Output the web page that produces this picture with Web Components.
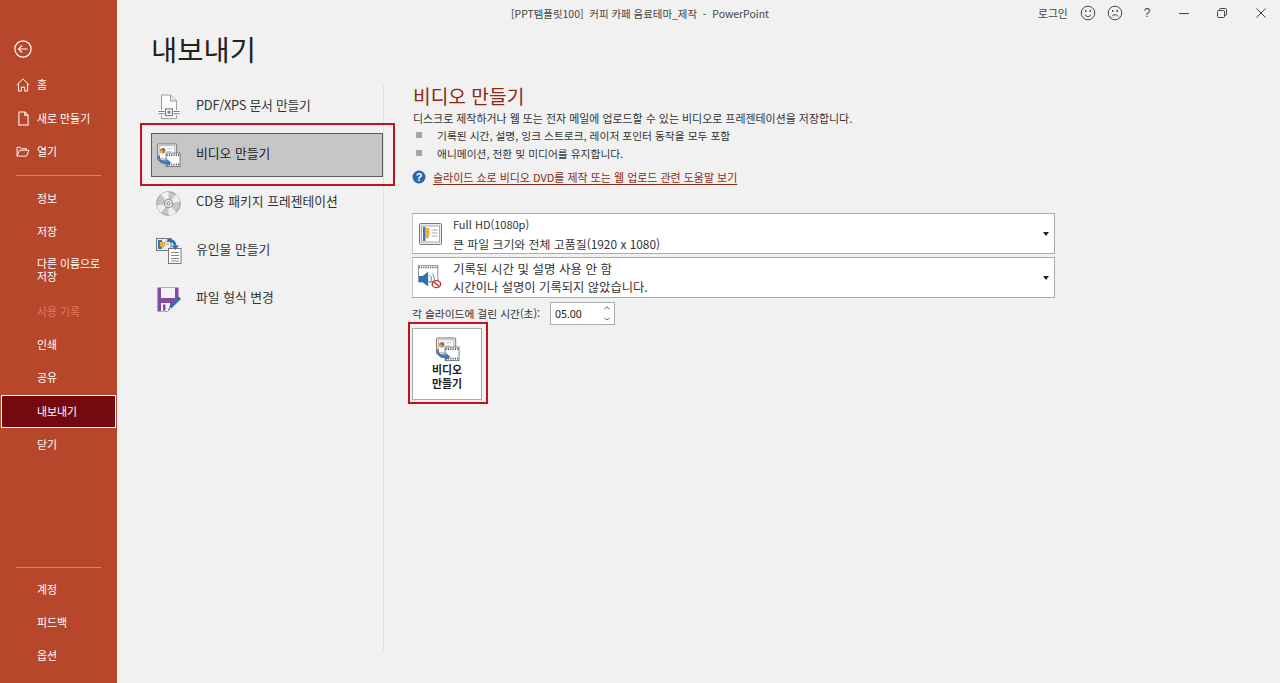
<!DOCTYPE html>
<html lang="ko"><head><meta charset="utf-8"><title>내보내기</title>
<style>
html,body{margin:0;height:100%;overflow:hidden}
body{font-family:"Noto Sans CJK KR","Noto Sans",sans-serif;background:#f1f1f1;color:#333}
</style></head><body>
<ppt-app></ppt-app>
<script>
const ICONS={
back:`<svg width="18" height="18" viewBox="0 0 20 20" fill="none" stroke="#fff" stroke-width="1.300"><circle cx="10" cy="10" r="9"/><path d="M15 10H5.200M9 6l-4 4 4 4"/></svg>`,
home:`<svg width="14" height="14" viewBox="0 0 16 16" fill="none" stroke="#fff" stroke-width="1.100"><path d="M.8 8 8 1l7.200 7M2.800 6.500V15H6v-4.500h4V15h3.200V6.500"/></svg>`,
new:`<svg width="11" height="15" viewBox="0 0 12 16" fill="none" stroke="#fff" stroke-width="1.100"><path d="M1 .8h6.500L11 4.300V15H1zM7.300 1v3.500H11"/></svg>`,
open:`<svg width="14" height="11" viewBox="0 0 16 13" fill="none" stroke="#fff" stroke-width="1.100"><path d="M1 12V1.500h4l1.300 1.700H12V5M1 12l2.800-7H15l-2.800 7z"/></svg>`,
pdf:`<svg width="24" height="26" viewBox="0 0 32 34"><path d="M6 1h12l8 8v23.500H6z" fill="#fbfbfb" stroke="#9a9a9a" stroke-width="1.300"/><path d="M18 1v8h8" fill="#e4e4e4" stroke="#9a9a9a" stroke-width="1.300"/><rect x="2" y="21" width="28" height="7" fill="#fff"/><path d="M2 23h8M2 26h8M22 23h8M22 26h8" stroke="#777" stroke-width="1.600"/><rect x="11.500" y="19.500" width="9" height="9" fill="#fff" stroke="#666" stroke-width="1.300"/><rect x="14" y="22" width="4" height="4" fill="#888"/></svg>`,
video:`<svg width="25" height="25" viewBox="0 0 26 26"><rect x="1.500" y="1" width="20" height="17" rx="1" fill="#e9e9ec" stroke="#777"/><rect x="3.500" y="3" width="16" height="13" fill="#fff" stroke="#bbb"/><path d="M11 6h6M11 9h5" stroke="#bbb"/><circle cx="7" cy="8" r="2.800" fill="#d9702e"/><path d="M7 8V5.200A2.800 2.800 0 0 1 9.800 8z" fill="#3f7fbf"/><path d="M4.200 8a2.800 2.800 0 0 0 2.800 2.800V8z" fill="#e2b33c"/><rect x="10.500" y="10.500" width="14.500" height="14" fill="#fff" stroke="#777"/><path d="M11 12.500h13.500M11 22.500h13.500" stroke="#555" stroke-width="1.800" stroke-dasharray="1.200 1.200"/><path d="M4 13c0 5 2 6 7 6v-2.500l5 4-5 4V22c-6 0-9-2-9-9z" fill="#3a78b5"/></svg>`,
cd:`<svg width="25" height="25" viewBox="0 0 26 26"><circle cx="13" cy="13" r="12.300" fill="#c6c6c6" stroke="#9a9a9a"/><path d="M13 13 5 3.500A12.300 12.300 0 0 1 13 .7zM13 13l8 9.500a12.300 12.300 0 0 1-8 2.800zM13 13l12-2a12.300 12.300 0 0 0-4-7.500zM13 13 1 15a12.300 12.300 0 0 0 4 7.500z" fill="#efefef"/><circle cx="13" cy="13" r="4.200" fill="#e4e4e4" stroke="#888"/><circle cx="13" cy="13" r="1.500" fill="#fff" stroke="#777"/></svg>`,
handout:`<svg width="26" height="26" viewBox="0 0 26 26"><rect x=".5" y=".5" width="14.500" height="12" fill="#e9e9ec" stroke="#777"/><rect x="2" y="2" width="4" height="9" fill="#3a78b5"/><path d="M4 4h5v4L6.500 10 4 8z" fill="#e6b23c"/><path d="M9 3.500h4M9 6h4" stroke="#aaa"/><rect x="12.500" y="10.500" width="12.500" height="15" fill="#fff" stroke="#777"/><path d="M15 14.500h8M15 17.500h8M15 20.500h8M15 23h8" stroke="#888"/><path d="M11 1.500c5-1.500 9 1 9.500 6h2.500l-3.800 4.500-3.700-4.500H18c-.4-2.500-3-4-6.500-3.500z" fill="#2f72b2"/></svg>`,
save:`<svg width="24" height="25" viewBox="0 0 24 25"><path d="M.5.500H21.500V13L11 24.500H.5z" fill="#7d4f9f"/><rect x="4" y="1" width="14" height="10" fill="#f5f1f8"/><rect x="4" y="16" width="9" height="8" fill="#f5f1f8"/><rect x="6" y="17.500" width="2.500" height="6" fill="#7d4f9f"/><path d="M11 24l1.200-4.500L22 9.500l2 2.500-10 9.800z" fill="#2f72b2"/><path d="M12 20l2 2" stroke="#fff"/></svg>`,
help:`<svg width="14" height="14" viewBox="0 0 14 14"><circle cx="7" cy="7" r="6.500" fill="#2a67a8"/><text x="7" y="10.800" text-anchor="middle" font-family="Liberation Sans" font-weight="700" font-size="11" fill="#fff">?</text></svg>`,
hd:`<svg width="23" height="22" viewBox="0 0 23 22"><rect x=".5" y=".5" width="22" height="21" rx="1" fill="#ececf0" stroke="#777"/><rect x="2.500" y="3" width="18" height="16" fill="#fff" stroke="#aaa"/><rect x="4" y="4" width="2.500" height="14" fill="#3a78b5"/><path d="M6.500 5h4v8l-2 3-2-2z" fill="#e6b23c"/><path d="M12.500 7h6M12.500 10h6M12.500 13h6" stroke="#aaa"/></svg>`,
noaudio:`<svg width="24" height="25" viewBox="0 0 26 32" preserveAspectRatio="none"><rect x=".5" y=".5" width="21" height="21" fill="#fff" stroke="#888"/><path d="M1 3h20" stroke="#555" stroke-width="2" stroke-dasharray="1.200 1.200"/><path d="M1 14h4l6-5.500v19L5 22H1z" fill="#2f72b2"/><path d="M13 13c2 2 2 8 0 10M15 10.500c3.500 3.500 3.500 11.500 0 15" fill="none" stroke="#2f72b2"/><circle cx="20" cy="24.500" r="4.500" fill="#fff" stroke="#c0392b" stroke-width="1.600"/><path d="m17 21.500 6 6" stroke="#c0392b" stroke-width="1.600"/></svg>`,
smile:`<svg width="16" height="16" viewBox="0 0 16 16" fill="none" stroke="#444"><circle cx="8" cy="8" r="6.800"/><path d="M4.800 9.800c1.500 2.300 4.900 2.300 6.400 0"/><path d="M5.700 5v2M10.300 5v2" stroke-width="1.300"/></svg>`,
frown:`<svg width="16" height="16" viewBox="0 0 16 16" fill="none" stroke="#444"><circle cx="8" cy="8" r="6.800"/><path d="M4.800 11.500c1.500-2.300 4.900-2.300 6.400 0"/><path d="M5.700 5v2M10.300 5v2" stroke-width="1.300"/></svg>`,
min:`<svg width="10" height="10" viewBox="0 0 10 10"><path d="M0 5.500h10" stroke="#444"/></svg>`,
max:`<svg width="10" height="10" viewBox="0 0 10 10" fill="none" stroke="#444"><rect x=".5" y="2.500" width="7" height="7" rx="1"/><path d="M2.500 2.500V1.500a1 1 0 0 1 1-1h5a1 1 0 0 1 1 1v5a1 1 0 0 1-1 1h-1"/></svg>`,
close:`<svg width="10" height="10" viewBox="0 0 10 10" fill="none" stroke="#444"><path d="m.5.500 9 9M9.500.500l-9 9"/></svg>`
};
function def(name,css,html,init){
  const t=document.createElement('template');t.innerHTML=`<style>${css}</style>${html}`;
  customElements.define(name,class extends HTMLElement{
    constructor(){super();this.attachShadow({mode:'open'}).appendChild(t.content.cloneNode(true));}
    connectedCallback(){init&&init(this,this.shadowRoot);}
  });
}
def('ppt-icon',':host{display:inline-flex;align-items:center;justify-content:center;flex:none}svg{display:block}','<span style="display:contents"></span>',(h,s)=>{s.querySelector('span').innerHTML=ICONS[h.getAttribute('name')]||'';});

def('ppt-nav-item',`:host{display:flex;align-items:center;height:33.200px;box-sizing:border-box;color:#fff;font-size:10.900px;line-height:13px;padding-left:37px;position:relative;flex:none}
:host([disabled]){color:#dd7a62}
:host([active]){background:#740a0f;box-shadow:inset 0 0 0 1px #fff;margin:.8px 1px 0;padding-left:36px}
:host([two]){height:46.800px;font-family:"Liberation Sans","Noto Sans CJK KR",sans-serif}
.ic{position:absolute;left:0;width:46px;top:0;bottom:0;display:flex;align-items:center;justify-content:center;box-sizing:border-box}`,
`<span class="ic"><slot name="icon"></slot></span><span><slot></slot></span>`);

def('ppt-nav',`:host{display:flex;flex-direction:column;width:117px;flex:none;height:683px;background:#b7472a;box-sizing:border-box;padding-top:40px;padding-bottom:10.500px}
.back{height:18px;padding-left:14px;display:flex;margin-bottom:10.400px}
.rule{height:1px;background:#d9826c;margin:7.500px 16px 5.200px;flex:none}
.grow{flex:1}`,
`<div class="back"><ppt-icon name="back"></ppt-icon></div>
<ppt-nav-item><ppt-icon slot="icon" name="home"></ppt-icon>홈</ppt-nav-item>
<ppt-nav-item><ppt-icon slot="icon" name="new"></ppt-icon>새로 만들기</ppt-nav-item>
<ppt-nav-item><ppt-icon slot="icon" name="open"></ppt-icon>열기</ppt-nav-item>
<div class="rule"></div>
<ppt-nav-item>정보</ppt-nav-item><ppt-nav-item>저장</ppt-nav-item>
<ppt-nav-item two>다른 이름으로<br>저장</ppt-nav-item>
<ppt-nav-item disabled>사용 기록</ppt-nav-item>
<ppt-nav-item>인쇄</ppt-nav-item><ppt-nav-item>공유</ppt-nav-item>
<ppt-nav-item active>내보내기</ppt-nav-item><ppt-nav-item>닫기</ppt-nav-item>
<div class="grow"></div><div class="rule" style="margin:0 16px 5px"></div>
<ppt-nav-item>계정</ppt-nav-item><ppt-nav-item>피드백</ppt-nav-item><ppt-nav-item>옵션</ppt-nav-item>`);

def('ppt-titlebar',`:host{display:flex;align-items:center;height:26px;position:relative;color:#444;font-size:10.450px}
.t{flex:1;text-align:center;white-space:pre;padding-right:117px}
.r{position:absolute;right:0;top:0;height:26px;display:flex;align-items:center}
.l{width:36px;font-size:10.800px}
.b{width:27px;display:flex;justify-content:center}
.q{font-family:"Liberation Sans";font-size:12px;width:38px}
.w{display:flex;justify-content:center}`,
`<div class="t"><slot></slot></div>
<div class="r"><span class="l">로그인</span><span class="b"><ppt-icon name="smile"></ppt-icon></span><span class="b"><ppt-icon name="frown"></ppt-icon></span><span class="b q">?</span><span class="w" style="width:36px"><ppt-icon name="min"></ppt-icon></span><span class="w" style="width:40px"><ppt-icon name="max"></ppt-icon></span><span class="w" style="width:38px"><ppt-icon name="close"></ppt-icon></span></div>`);

def('ppt-export-item',`:host{display:flex;align-items:center;height:44px;margin:4px 0 4px 11px;width:232px;box-sizing:border-box;font-size:12.800px;color:#333;border:1px solid transparent}
:host([selected]){background:#c6c6c6;border-color:#5c5c5c;color:#222}
.i{width:33px;display:flex;justify-content:center;margin-right:11px;flex:none}
.tx{margin-bottom:6px}`,
`<span class="i"><slot name="icon"></slot></span><span class="tx"><slot></slot></span>`);

def('ppt-dropdown',`:host{display:flex;align-items:center;width:643px;height:41px;background:#fff;border:1px solid #ababab;border-left-color:#c4c4c4;box-sizing:border-box;font-size:12.300px;color:#333;position:relative}
.i{width:34px;flex:none;display:flex;justify-content:center;margin-right:6px}
.tx{display:flex;flex-direction:column;gap:6px;line-height:13px;flex:1}
.a{width:0;height:0;border:3px solid transparent;border-top:4px solid #222;border-bottom:0;margin-right:5px}`,
`<span class="i"><slot name="icon"></slot></span><span class="tx"><slot></slot></span><span class="a"></span>`);

def('ppt-spin',`:host{display:flex;align-items:center;width:65px;height:23px;background:#fff;border:1px solid #ababab;box-sizing:border-box;font-size:10.500px;color:#222;padding-left:4px;font-family:"Noto Sans","Noto Sans CJK KR",sans-serif}
span{flex:1}
svg{display:block;margin-right:3px}`,
`<span><slot></slot></span><svg width="8" height="17" viewBox="0 0 8 17" fill="none" stroke="#666"><path d="m1.500 4 2.500-2 2.500 2M1.500 13 4 15l2.500-2"/></svg>`);

def('ppt-make',`:host{display:flex;flex-direction:column;align-items:center;width:70px;height:72px;background:#fff;border:1px solid #ababab;box-sizing:border-box;font-size:10.900px;font-weight:700;color:#222;text-align:center;line-height:14px;padding-top:8px}
.t{margin-top:1px;font-family:"Liberation Sans","Noto Sans CJK KR",sans-serif}`,
`<ppt-icon name="video"></ppt-icon><div class="t"><slot></slot></div>`);

def('ppt-app',`:host{display:flex;width:1280px;height:683px;position:relative;overflow:hidden;background:#f1f1f1}
.main{flex:1;display:flex;flex-direction:column;min-width:0}
h1{font-weight:400;font-size:28.500px;line-height:40px;color:#222;margin:3px 0 0 34px;height:40px}
.cols{display:flex;margin-top:15px}
.left{width:267px;height:568px;border-right:1px solid #e2e2e2;box-sizing:border-box;padding-left:23px;flex:none}
.right{padding-left:28px;flex:1}
.list{margin-top:-3px}
.hi{position:absolute;border:2px solid #c8101a;box-sizing:border-box;pointer-events:none}
h2{font-weight:400;font-size:19.200px;line-height:24px;color:#8a2a14;margin:0 0 1px 1px}
.p{font-size:10.950px;line-height:18px;color:#333;white-space:nowrap;margin-left:1px}
.d{margin-top:-1px}
.li{display:flex;align-items:center;height:18px;font-size:10.750px;color:#333;margin-left:3px}
.li i{width:6px;height:6px;background:#a6a6a6;margin-right:15px;margin-left:1px;flex:none}
.help{display:flex;align-items:center;gap:7px;margin-top:6px;height:18px;font-size:10.970px}
a{color:#8a2a14;text-decoration:underline;text-underline-offset:2px}
.sel{margin-top:27px;display:flex;flex-direction:column;gap:3px}
.dur{display:flex;align-items:center;font-size:10.750px;color:#333;margin-top:4px;height:23px}
.dur span{width:138px;white-space:nowrap}
.mk{margin-top:3px}`,
`<ppt-nav></ppt-nav>
<div class="main">
<ppt-titlebar>[PPT템플릿100]  커피 카페 음료테마_제작  -  PowerPoint</ppt-titlebar>
<h1>내보내기</h1>
<div class="cols">
 <div class="left"><div class="list">
  <ppt-export-item style="letter-spacing:-.25px"><ppt-icon slot="icon" name="pdf"></ppt-icon>PDF/XPS 문서 만들기</ppt-export-item>
  <ppt-export-item selected><ppt-icon slot="icon" name="video"></ppt-icon>비디오 만들기</ppt-export-item>
  <ppt-export-item><ppt-icon slot="icon" name="cd"></ppt-icon>CD용 패키지 프레젠테이션</ppt-export-item>
  <ppt-export-item><ppt-icon slot="icon" name="handout"></ppt-icon>유인물 만들기</ppt-export-item>
  <ppt-export-item><ppt-icon slot="icon" name="save"></ppt-icon>파일 형식 변경</ppt-export-item>
 </div></div>
 <div class="right">
  <h2>비디오 만들기</h2>
  <div class="p">디스크로 제작하거나 웹 또는 전자 메일에 업로드할 수 있는 비디오로 프레젠테이션을 저장합니다.</div>
  <div class="d">
  <div class="li"><i></i>기록된 시간, 설명, 잉크 스트로크, 레이저 포인터 동작을 모두 포함</div>
  <div class="li"><i></i>애니메이션, 전환 및 미디어를 유지합니다.</div>
  </div>
  <div class="help"><ppt-icon name="help"></ppt-icon><a>슬라이드 쇼로 비디오 DVD를 제작 또는 웹 업로드 관련 도움말 보기</a></div>
  <div class="sel">
   <ppt-dropdown><ppt-icon slot="icon" name="hd"></ppt-icon><div style="font-size:11px">Full HD(1080p)</div><div style="font-size:11.900px">큰 파일 크기와 전체 고품질(1920 x 1080)</div></ppt-dropdown>
   <ppt-dropdown><ppt-icon slot="icon" name="noaudio"></ppt-icon><div style="font-size:12.500px">기록된 시간 및 설명 사용 안 함</div><div>시간이나 설명이 기록되지 않았습니다.</div></ppt-dropdown>
  </div>
  <div class="dur"><span>각 슬라이드에 걸린 시간(초):</span><ppt-spin>05.00</ppt-spin></div>
  <div class="mk"><ppt-make>비디오<br>만들기</ppt-make></div>
 </div>
</div>
</div>
<div class="hi" style="left:140px;top:123px;width:255px;height:63px"></div>
<div class="hi" style="left:408px;top:322px;width:80px;height:82px"></div>`);
</script>
</body></html>
